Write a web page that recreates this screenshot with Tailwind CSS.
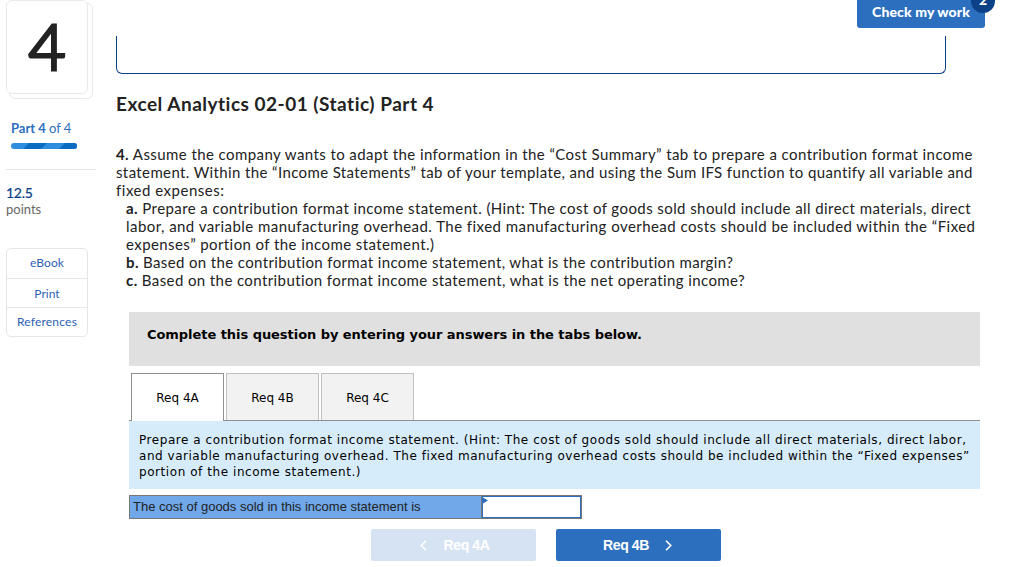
<!DOCTYPE html>
<html lang="en">
<head>
  <meta charset="UTF-8">
  <title>Excel Analytics 02-01 (Static) Part 4</title>
  <script src="https://cdn.jsdelivr.net/npm/@tailwindcss/browser@4"></script>
</head>
<body class="bg-white h-[567px] overflow-hidden flex font-['Lato',sans-serif] text-[#222]">

  <!-- Sidebar -->
  <aside class="w-[110px] shrink-0 pl-[6px]">
    <div class="relative w-[87px] h-[99px]">
      <div class="absolute left-[3px] top-[3px] w-[84px] h-[96px] border border-[#e9e9e9] rounded-md"></div>
      <div class="absolute left-0 top-0 w-[82px] h-[94px] border border-[#e9e9e9] rounded-md bg-white flex items-center justify-center">
        <span class="text-[64px] leading-none pb-[3px] font-light [-webkit-text-stroke:3.2px_#222] [stroke-linejoin:round]">4</span>
      </div>
    </div>
    <p class="mt-[21px] ml-[5px] h-[17px] leading-[17px] text-[13px] text-[#2d6fc0] whitespace-nowrap tracking-[-0.02px]"><b>Part 4</b> of 4</p>
    <svg class="mt-[6px] ml-[5px] rounded-full" width="66" height="6" viewBox="0 0 66 6">
      <rect width="66" height="6" fill="#2f8de0"/>
      <path d="M12 6L18 0H36L30 6ZM48 6L54 0H66V6Z" fill="#0b6cc4"/>
    </svg>
    <div class="mt-[20px] w-[90px] h-px bg-[#e6e6e6]"></div>
    <p class="mt-[15px] h-[16px] leading-[16px] text-[14px] text-[#0b4186] tracking-[-0.3px] [-webkit-text-stroke:0.2px_#0b4186]">12.5</p>
    <p class="h-[16px] leading-[16px] text-[13px] text-[#666]">points</p>
    <nav class="mt-[31px] w-[82px] h-[89px] border border-[#e6e6e6] rounded-[5px] text-[12px] text-[#2d62b4] text-center flex flex-col">
      <a class="h-[30px] leading-[28px] border-b border-[#e6e6e6] tracking-[0.1px]">eBook</a>
      <a class="h-[29px] leading-[30px] border-b border-[#e6e6e6]">Print</a>
      <a class="h-[28px] leading-[28px] tracking-[0.2px]">References</a>
    </nav>
  </aside>

  <!-- Question -->
  <main class="pl-[6px] w-[907px]">
    <div class="h-[36px] flex justify-end pr-[32px]">
      <div class="relative w-[128px] shrink-0 h-[28px] rounded-b-[3px] bg-[#2d6fbf] text-white text-[14px] font-black leading-[24px] text-center tracking-[0.12px]">
        Check my work
        <span class="absolute left-[114px] top-[-11px] w-[24px] h-[24px] rounded-full bg-[#0b4186] leading-[22px]">2</span>
      </div>
    </div>
    <div class="w-[830px] h-[38px] border border-t-0 border-[#0b4186] rounded-b-[6px]"></div>

    <h1 class="mt-[18px] h-[24px] leading-[24px] text-[19px] font-bold whitespace-nowrap tracking-[0.5px]">Excel Analytics 02-01 (Static) Part 4</h1>

    <div class="mt-[29px] text-[15px] leading-[18px] whitespace-nowrap">
      <p class="tracking-[0.42px]"><b>4.</b> Assume the company wants to adapt the information in the “Cost Summary” tab to prepare a contribution format income</p>
      <p class="tracking-[0.38px]">statement. Within the “Income Statements” tab of your template, and using the Sum IFS function to quantify all variable and</p>
      <p class="tracking-[0.52px]">fixed expenses:</p>
      <div class="pl-[10px]">
        <p class="tracking-[0.42px]"><b>a.</b> Prepare a contribution format income statement. (Hint: The cost of goods sold should include all direct materials, direct</p>
        <p class="tracking-[0.45px]">labor, and variable manufacturing overhead. The fixed manufacturing overhead costs should be included within the “Fixed</p>
        <p class="tracking-[0.42px]">expenses” portion of the income statement.)</p>
        <p class="tracking-[0.37px]"><b>b.</b> Based on the contribution format income statement, what is the contribution margin?</p>
        <p class="tracking-[0.4px]"><b>c.</b> Based on the contribution format income statement, what is the net operating income?</p>
      </div>
    </div>

    <div class="mt-[23px] ml-[13px] w-[851px] font-['DejaVu_Sans',sans-serif] text-[13px] text-black whitespace-nowrap">
      <div class="h-[54px] pl-[18px] pt-[14px] bg-[#e0e0e0] leading-[18px] font-bold tracking-[-0.05px]">Complete this question by entering your answers in the tabs below.</div>

      <!-- Tabs -->
      <div class="mt-[7px] h-[48px] pl-[2px] flex gap-[2px] border-b border-[#8f8f8f] text-[12px] leading-[48px] text-center">
        <div class="w-[93px] h-[48px] border border-b-0 border-[#8f8f8f] bg-white">Req 4A</div>
        <div class="w-[93px] h-[47px] border border-b-0 border-[#c0c0c0] bg-[#f2f2f2]">Req 4B</div>
        <div class="w-[93px] h-[47px] border border-b-0 border-[#c0c0c0] bg-[#f2f2f2]">Req 4C</div>
      </div>

      <div class="h-[68px] pl-[10px] pt-[11px] bg-[#d7ecfb] text-[12px] leading-[16px]">
        <p class="tracking-[0.545px]">Prepare a contribution format income statement. (Hint: The cost of goods sold should include all direct materials, direct labor,</p>
        <p class="tracking-[0.53px]">and variable manufacturing overhead. The fixed manufacturing overhead costs should be included within the “Fixed expenses”</p>
        <p class="tracking-[0.56px]">portion of the income statement.)</p>
      </div>

      <!-- Answer row -->
      <div class="mt-[6px] w-[453px] h-[24px] border border-[#777] flex font-['Liberation_Sans',Arial,sans-serif] text-[13px] leading-[22px] text-[#222]">
        <div class="w-[352px] pl-[3px] border-r border-[#777] bg-[#70a8e9]">The cost of goods sold in this income statement is</div>
        <div class="relative w-[99px] border border-[#2d6fbf] bg-white">
          <svg class="absolute left-0 top-0" width="5" height="7" viewBox="0 0 5 7"><path d="M0 0.5L5 3.5L0 6.5Z" fill="#2d6fbf"/></svg>
        </div>
      </div>

      <div class="mt-[10px] pl-[242px] flex gap-[20px] font-['Liberation_Sans',Arial,sans-serif] text-[14px] font-bold text-white tracking-[-0.37px]">
        <div class="w-[165px] h-[32px] rounded-[2px] bg-[#d6e3f3] flex items-center justify-center gap-[16px] pl-[3px]">
          <svg width="7" height="11" viewBox="0 0 7 11" fill="none" stroke="currentColor" stroke-width="1.6"><path d="M6 0.8L1.2 5.5L6 10.2"/></svg>
          <span>Req 4A</span>
        </div>
        <div class="w-[165px] h-[32px] rounded-[2px] bg-[#2d6fbf] flex items-center justify-center gap-[16px] pr-[2px]">
          <span>Req 4B</span>
          <svg width="7" height="11" viewBox="0 0 7 11" fill="none" stroke="currentColor" stroke-width="1.6"><path d="M1 0.8L5.8 5.5L1 10.2"/></svg>
        </div>
      </div>
    </div>
  </main>
</body>
</html>
